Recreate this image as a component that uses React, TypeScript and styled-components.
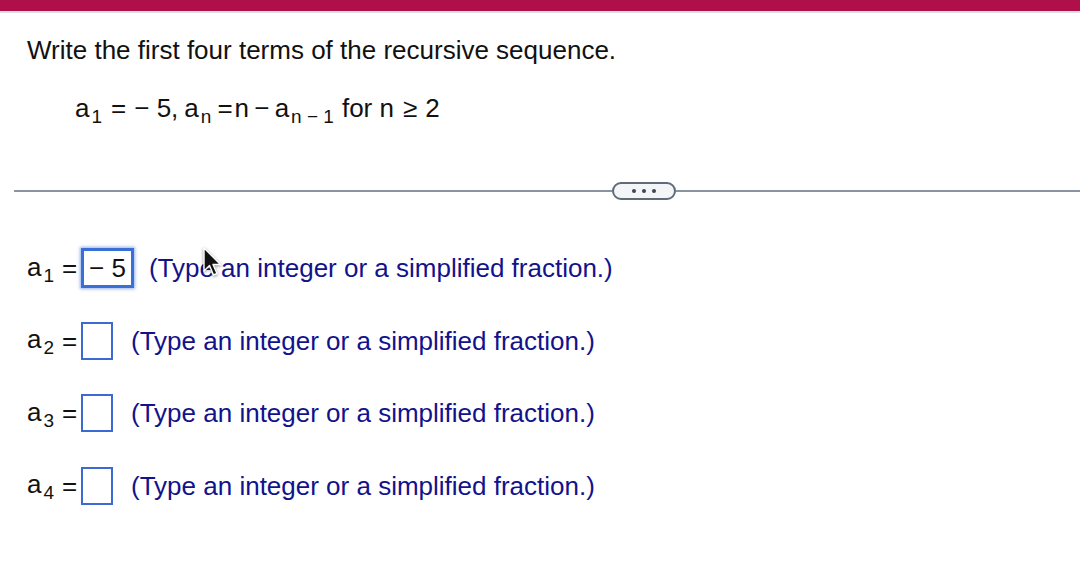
import React from 'react';
import styled, { createGlobalStyle } from 'styled-components';

const GlobalStyle = createGlobalStyle`
  html, body {
    margin: 0;
    padding: 0;
    background: #fff;
  }
  body {
    font-family: "Liberation Sans", Arial, sans-serif;
    color: #111;
  }
`;

interface Term {
  index: number;
  value?: string;
  focused?: boolean;
}

const terms: Term[] = [
  { index: 1, value: '\u2212 5', focused: true },
  { index: 2 },
  { index: 3 },
  { index: 4 },
];

const App: React.FC = () => {
  return (
    <>
      <GlobalStyle />
      <Page>
        <TopBar />
        <Content>
          <Title>Write the first four terms of the recursive sequence.</Title>
          <Formula>
            a<Sub>1</Sub>
            <Op>=</Op>
            <span>{'\u2212'} 5,</span>
            <Gap />
            a<Sub>n</Sub>
            <Op tight>=</Op>n{'\u2009\u2212\u2009'}a<Sub>n {'\u2212'} 1</Sub>
            <Gap wide />
            for n<Op>{'\u2265'}</Op>2
          </Formula>
        </Content>
        <Divider>
          <Line />
          <MoreButton aria-label="more">
            <Dot />
            <Dot />
            <Dot />
          </MoreButton>
          <Line grow />
        </Divider>
        <Answers>
          {terms.map(term => (
            <Row key={term.index}>
              <Label>
                a<Sub>{term.index}</Sub>
              </Label>
              <Equals>=</Equals>
              <AnswerBox focused={term.focused}>{term.value}</AnswerBox>
              <Hint focused={term.focused}>
                (Type an integer or a simplified fraction.)
                {term.focused && (
                  <Cursor viewBox="0 0 20 30">
                    <path
                      d="M2 1 L2 24 L7.5 18.5 L11.5 28 L15 26.5 L11 17.5 L18.5 17.5 Z"
                      fill="#111"
                      stroke="#fff"
                      strokeWidth="1.4"
                      strokeLinejoin="round"
                    />
                  </Cursor>
                )}
              </Hint>
            </Row>
          ))}
        </Answers>
      </Page>
    </>
  );
};

const Page = styled.div`
  width: 1080px;
  height: 572px;
  overflow: hidden;
`;

const TopBar = styled.div`
  height: 11px;
  background: #b0104a;
  border-bottom: 2px solid #d9dfe7;
`;

const Content = styled.div`
  padding: 22px 0 0 27px;
`;

const Title = styled.div`
  font-size: 26px;
  line-height: 30px;
`;

const Formula = styled.div`
  font-size: 26px;
  line-height: 30px;
  margin: 28px 0 0 48px;
  display: flex;
  align-items: baseline;
  white-space: pre;
`;

const Sub = styled.span`
  font-size: 19px;
  position: relative;
  top: 6px;
  margin-left: 2px;
`;

const Op = styled.span<{ tight?: boolean }>`
  margin: ${props => (props.tight ? '0 2px 0 6px' : '0 8px 0 9px')};
`;

const Gap = styled.span<{ wide?: boolean }>`
  width: ${props => (props.wide ? '8px' : '6px')};
`;

const Divider = styled.div`
  display: flex;
  align-items: center;
  margin: 56px 0 0 14px;
  height: 18px;
`;

const Line = styled.div<{ grow?: boolean }>`
  height: 2px;
  background: #8a93a0;
  width: ${props => (props.grow ? 'auto' : '598px')};
  flex: ${props => (props.grow ? '1' : 'none')};
`;

const MoreButton = styled.div`
  width: 60px;
  height: 14px;
  border: 2px solid #5f6b7a;
  border-radius: 9px;
  background: #f4f5f7;
  display: flex;
  align-items: center;
  justify-content: center;
  gap: 6px;
`;

const Dot = styled.span`
  width: 4px;
  height: 4px;
  border-radius: 50%;
  background: #3d4652;
`;

const Answers = styled.div`
  margin-top: 48px;
  padding-left: 27px;
  display: flex;
  flex-direction: column;
  gap: 32.5px;
`;

const Row = styled.div`
  display: flex;
  align-items: center;
  height: 40px;
  font-size: 26px;
  line-height: 30px;
`;

const Label = styled.span`
  width: 35px;
  white-space: pre;
`;

const Equals = styled.span`
  width: 19px;
`;

const AnswerBox = styled.div<{ focused?: boolean }>`
  box-sizing: border-box;
  height: ${props => (props.focused ? '40px' : '38px')};
  min-width: 32px;
  padding: ${props => (props.focused ? '0 5px' : '0')};
  display: flex;
  align-items: center;
  border-style: solid;
  border-color: ${props => (props.focused ? '#3a6fd8' : '#3b6bd2')};
  border-width: ${props => (props.focused ? '3px' : '2px')};
  box-shadow: ${props => (props.focused ? '0 0 3px 1px rgba(58, 111, 216, 0.55)' : 'none')};
  background: #fff;
  color: #111;
  white-space: pre;
`;

const Hint = styled.span<{ focused?: boolean }>`
  position: relative;
  margin-left: ${props => (props.focused ? '15px' : '18px')};
  color: #12128c;
  white-space: pre;
`;

const Cursor = styled.svg`
  position: absolute;
  left: 53px;
  top: -6px;
  width: 20px;
  height: 30px;
  filter: drop-shadow(0 1px 1.5px rgba(0, 0, 0, 0.45));
`;

export default App;
